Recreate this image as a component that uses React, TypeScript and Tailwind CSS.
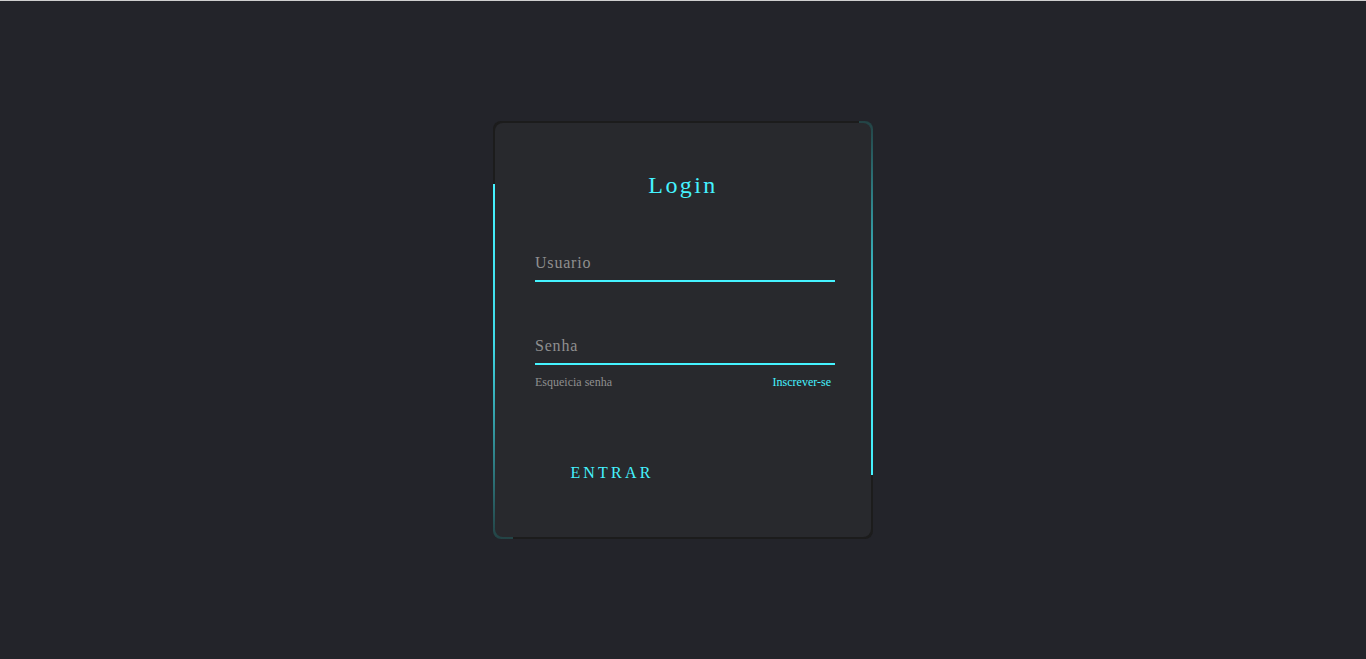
export default function App() {
  return (
    <div className="flex h-[659px] w-full items-start justify-center border-t border-[#cfcfcf] bg-[#23242a] pt-[120px] font-['Liberation_Serif',serif]">
      <div className="relative h-[418px] w-[380px] overflow-hidden rounded-lg bg-[#1c1c1c]">
        {/* animated border snapshot */}
        <div className="absolute bottom-0 left-0 top-[63px] w-[20px] bg-[linear-gradient(to_bottom,#45f3ff_0%,#3fd9e6_45%,rgba(69,243,255,0.18)_100%)]" />
        <div className="absolute right-0 top-0 h-[354px] w-[14px] bg-[linear-gradient(to_bottom,rgba(69,243,255,0.18)_0%,#3fd9e6_55%,#45f3ff_100%)]" />

        <form className="absolute inset-[2px] z-10 flex flex-col rounded-lg bg-[#28292d] px-10 pt-[49px]">
          <h2 className="text-center text-[24px] leading-[27px] font-normal tracking-[0.1em] text-[#45f3ff]">Login</h2>

          <InputBox label="Usuario" className="mt-[35px]" />
          <InputBox label="Senha" className="mt-[35px]" />

          <div className="flex w-[296px] justify-between">
            <a className="my-[10px] text-[12px] leading-[14px] text-[#8f8f8f]">Esqueicia senha</a>
            <a className="my-[10px] text-[12px] leading-[14px] text-[#45f3ff]">Inscrever-se</a>
          </div>

          <button
            type="button"
            className="mt-[54px] w-[154px] py-[11px] text-center text-[16px] leading-[18px] tracking-[0.2em] text-[#45f3ff]"
          >
            ENTRAR
          </button>
        </form>
      </div>
    </div>
  );
}

function InputBox({ label, className }: { label: string; className?: string }) {
  return (
    <div className={`relative h-[48px] w-[300px] ${className ?? ''}`}>
      <span className="absolute left-0 pt-[20px] text-[16px] leading-[18px] tracking-[0.05em] text-[#8f8f8f]">{label}</span>
      <i className="absolute bottom-0 left-0 h-[2px] w-full bg-[#45f3ff]" />
    </div>
  );
}
